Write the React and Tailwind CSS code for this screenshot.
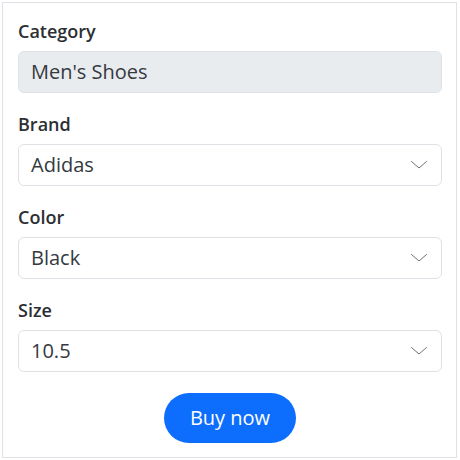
import React from "react";

function Chevron() {
  return (
    <svg width="16" height="16" viewBox="0 0 16 16" className="shrink-0">
      <path d="M0.5 4.5 L8 11 L15.5 4.5" fill="none" stroke="#6c7177" strokeWidth="1" strokeLinecap="round" strokeLinejoin="round" />
    </svg>
  );
}

function Field({ label, value, disabled }) {
  return (
    <div className="flex flex-col">
      <div className="text-[18px] leading-[24px] font-semibold text-[#2b2f33] mb-[8px]">{label}</div>
      <div
        className={
          disabled
            ? "h-[42px] rounded-[6px] border border-[#dee2e6] bg-[#e9ecef] px-[12px] flex items-center text-[20px] text-[#343a40]"
            : "h-[42px] rounded-[6px] border border-[#dee2e6] bg-white pl-[12px] pr-[14px] flex items-center justify-between text-[20px] text-[#343a40]"
        }
      >
        <span>{value}</span>
        {!disabled && <Chevron />}
      </div>
    </div>
  );
}

export default function App() {
  return (
    <div className="w-[460px] h-[460px] bg-white" style={{ fontFamily: '"Open Sans", "Noto Sans", sans-serif' }}>
      <div className="ml-[2px] mt-[2px] w-[455px] h-[456px] border border-[#dee2e6] pl-[15px] pr-[14px] pt-[16px] flex flex-col">
        <div className="flex flex-col gap-[19px]">
          <Field label="Category" value="Men's Shoes" disabled />
          <Field label="Brand" value="Adidas" />
          <Field label="Color" value="Black" />
          <Field label="Size" value="10.5" />
        </div>
        <div className="flex justify-center mt-[21px]">
          <button className="w-[132px] h-[50px] rounded-full bg-[#0d6efd] text-white text-[20px] flex items-center justify-center">
            Buy now
          </button>
        </div>
      </div>
    </div>
  );
}
